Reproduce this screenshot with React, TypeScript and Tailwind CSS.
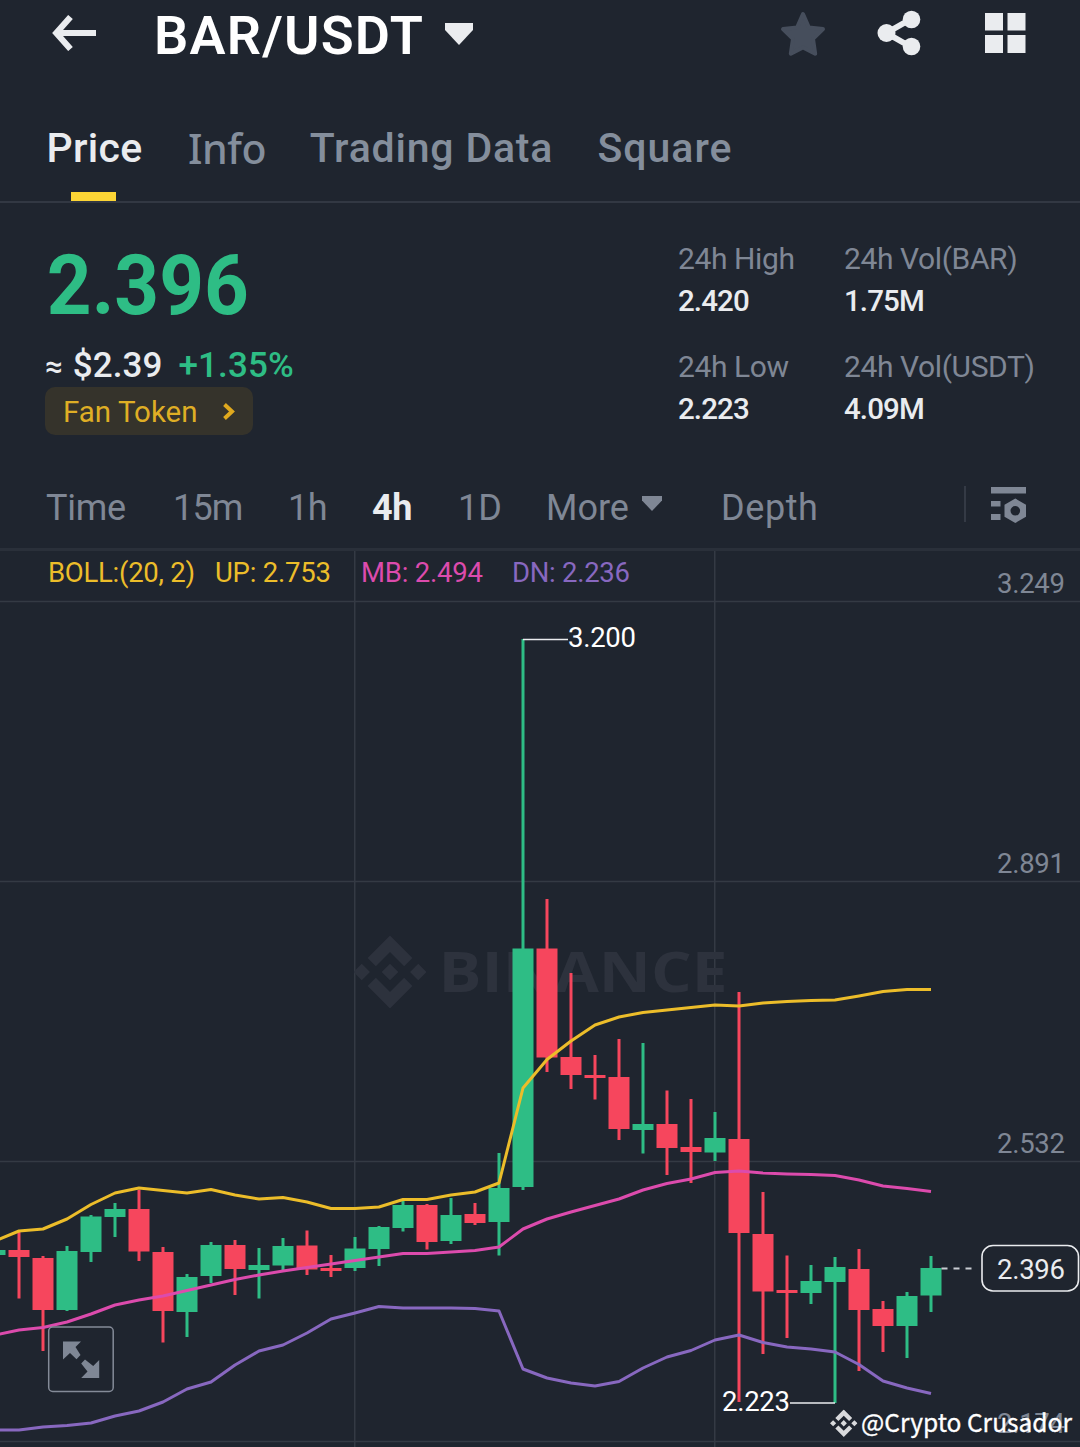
import { useState } from "react";
import clsx from "clsx";

type Candle = {
  up: boolean;
  high: number;
  top: number;
  bottom: number;
  low: number;
};

const STEP = 24;
const FIRST_X = -5;

// up, high, body top, body bottom, low
const RAW: [number, number, number, number, number][] = [
  [1, 1250, 1250, 1255, 1255],
  [0, 1232, 1250, 1257, 1298.5],
  [0, 1256, 1258, 1310, 1351],
  [1, 1246, 1251, 1310, 1311],
  [1, 1215, 1216.5, 1252, 1262],
  [1, 1203, 1209, 1217, 1237],
  [0, 1190, 1209, 1251.5, 1261],
  [0, 1247, 1252, 1311, 1342.5],
  [1, 1274, 1277, 1312, 1337],
  [1, 1242, 1245, 1276, 1283],
  [0, 1240, 1245, 1269, 1295],
  [1, 1248, 1265, 1270, 1298.5],
  [1, 1238, 1246, 1265.5, 1270],
  [0, 1230.5, 1245.5, 1269.5, 1275],
  [0, 1255, 1268, 1271, 1277],
  [1, 1237, 1248.5, 1268, 1271],
  [1, 1226, 1227, 1249, 1266],
  [1, 1201, 1205, 1228, 1231.5],
  [0, 1204, 1205, 1242, 1249.5],
  [1, 1198, 1215, 1241, 1244],
  [0, 1203, 1214, 1223, 1225],
  [1, 1153, 1188, 1222, 1255.5],
  [1, 639, 948.5, 1187, 1190],
  [0, 899, 948.5, 1057.5, 1072],
  [0, 973, 1057, 1075, 1089],
  [0, 1055, 1075, 1078, 1099.5],
  [0, 1039, 1077, 1129, 1140],
  [1, 1043, 1124, 1130, 1153.5],
  [0, 1090.5, 1124, 1148, 1175],
  [0, 1099, 1147, 1152, 1183],
  [1, 1112, 1138, 1152.5, 1161],
  [0, 992, 1139, 1233, 1402],
  [0, 1192, 1234, 1291.5, 1354],
  [0, 1255.5, 1290, 1293, 1338],
  [1, 1265, 1281, 1293, 1304],
  [1, 1257, 1267, 1282, 1403],
  [0, 1249, 1269, 1310, 1371],
  [0, 1301, 1309, 1326, 1352],
  [1, 1292, 1296, 1326, 1358],
  [1, 1256, 1268, 1295.5, 1312],
];

const CANDLES: Candle[] = RAW.map(([up, high, top, bottom, low]) => ({ up: up === 1, high, top, bottom, low }));

const BANDS = [
  {
    name: "up",
    color: "#ecbd2a",
    values: [
      1241, 1231, 1229, 1219, 1204.5, 1193, 1188, 1190.5, 1193, 1189.5, 1195, 1199, 1197.5, 1202, 1208.5, 1208.5,
      1207, 1199.5, 1199.5, 1195, 1192, 1183, 1088, 1059.5, 1041, 1025, 1017, 1012.5, 1010, 1007.5, 1005, 1006,
      1003, 1001.5, 1000.5, 1000, 996, 991.5, 989.5, 989.5,
    ],
  },
  {
    name: "mid",
    color: "#dc4bad",
    values: [
      1335, 1330, 1327.5, 1322, 1314, 1305, 1300, 1296, 1290.5, 1285, 1279.5, 1275, 1271, 1267.5, 1264, 1260.5,
      1257, 1253.5, 1253.5, 1252, 1250.5, 1247, 1229, 1219, 1212, 1205.5, 1199, 1190, 1183.5, 1179, 1172.5, 1171,
      1173, 1174, 1174.5, 1175.5, 1180, 1186, 1188.5, 1191.5,
    ],
  },
  {
    name: "down",
    color: "#8868c0",
    values: [
      1430, 1430, 1427, 1425.5, 1423, 1416, 1411, 1402, 1389, 1382, 1365, 1351, 1345, 1333, 1319, 1313,
      1306.5, 1308, 1308, 1308, 1308.5, 1311, 1369, 1378, 1383, 1386, 1381.5, 1368, 1357, 1350.5, 1340, 1335,
      1342.5, 1347, 1349, 1352, 1364.5, 1381, 1388, 1393.5,
    ],
  },
];

const AXIS = [
  { y: 601.5, label: "3.249" },
  { y: 881.5, label: "2.891" },
  { y: 1161.5, label: "2.532" },
  { y: 1441.5, label: "2.174" },
];

const LEGEND = [
  { x: 48, width: 147, color: "#ecbd2a", text: "BOLL:(20, 2)" },
  { x: 215, width: 116, color: "#ecbd2a", text: "UP: 2.753" },
  { x: 361, width: 122, color: "#dc4bad", text: "MB: 2.494" },
  { x: 512, width: 118, color: "#8868c0", text: "DN: 2.236" },
];

const TABS = [
  { label: "Price", width: "w-[99px]", style: "pl-[2px] tracking-[0.3px]" },
  { label: "Info", width: "w-[78px]", style: "font-['Noto_Sans',sans-serif] tracking-[-0.5px]" },
  { label: "Trading Data", width: "w-[241px]", style: "tracking-[0.8px]" },
  { label: "Square", width: "w-[136px]", style: "tracking-[1px]" },
];

const STATS = [
  { label: "24h High", value: "2.420" },
  { label: "24h Vol(BAR)", value: "1.75M" },
  { label: "24h Low", value: "2.223" },
  { label: "24h Vol(USDT)", value: "4.09M" },
];

const INTERVALS = [
  { label: "Time", width: "w-[127px] tracking-[-0.3px]" },
  { label: "15m", width: "w-[115px] tracking-[-0.8px]" },
  { label: "1h", width: "w-[84px] tracking-[-0.5px]" },
  { label: "4h", width: "w-[86px] tracking-[-0.5px]" },
  { label: "1D", width: "w-[88px]" },
];

function BinanceMark({ x, y, size, fill }: { x: number; y: number; size: number; fill: string }) {
  return (
    <svg x={x} y={y} width={size} height={size} viewBox="0 0 126.6 126.6" fill={fill}>
      <path d="M38.7 53.2 63.3 28.6 87.9 53.2 102.2 38.9 63.3 0 24.4 38.9zM0 63.3 14.3 49 28.6 63.3 14.3 77.6zM38.7 73.4 63.3 98 87.9 73.4 102.2 87.7 63.3 126.6 24.4 87.7zM98 63.3 112.3 49 126.6 63.3 112.3 77.6zM77.8 63.3 63.3 48.8 48.8 63.3 63.3 77.8z" />
    </svg>
  );
}

function Header() {
  return (
    <header className="flex h-[70px] items-center pl-[52px] pr-[54px]">
      <svg className="mt-[-4px] h-[36px] w-[46px]" viewBox="0 0 46 36" fill="none" stroke="#eaecef" strokeWidth="6.2">
        <path d="M44 18H6M18.500 2 4.300 18l14.200 16" />
      </svg>
      <h1 className="ml-[56px] w-[270px] whitespace-nowrap pt-[2px] text-[54px] leading-[70px] font-semibold tracking-[1.2px] text-white">
        BAR/USDT
      </h1>
      <svg className="ml-[21px] mt-[-2px] h-[22px] w-[28px]" viewBox="0 0 28 22" fill="#eaecef">
        <path d="M0 0h28v7L14 22 0 7z" />
      </svg>
      <div className="ml-auto flex items-center">
        <svg className="mt-[-2px] h-[46px] w-[46px]" viewBox="0 0 46 46" fill="#464e5c" stroke="#464e5c" strokeWidth="4" strokeLinejoin="round">
          <path d="m23 3 5.900 13.500 14.100 1.600-10 9.600 2.200 15L23 36.500l-12.200 6.200 2.200-15L3 18.100l14.100-1.600z" />
        </svg>
        <svg className="ml-[51px] mt-[-4px] h-[46px] w-[44px]" viewBox="0 0 44 46" fill="#eaecef">
          <path d="M34 9 9.500 23 34 37" fill="none" stroke="#eaecef" strokeWidth="6" />
          <circle cx="34.500" cy="9.500" r="8.800" />
          <circle cx="9.500" cy="23" r="9" />
          <circle cx="34.500" cy="36.500" r="8.800" />
        </svg>
        <svg className="ml-[64px] mt-[-4px] h-[40px] w-[41px]" viewBox="0 0 41 40" fill="#eaecef">
          <path d="M0 0h18v17.500H0zM22.500 0h18v17.500h-18zM0 22h18v18H0zM22.500 22h18v18h-18z" />
        </svg>
      </div>
    </header>
  );
}

function Tabs() {
  const [active, setActive] = useState("Price");
  return (
    <nav className="flex h-[133px] items-end gap-[45px] border-b-2 border-[#323843] pl-[44px]">
      {TABS.map((tab) => (
        <button
          key={tab.label}
          type="button"
          onClick={() => setActive(tab.label)}
          className={clsx(
            "flex flex-col items-center whitespace-nowrap text-[41px] leading-[60px] font-medium",
            tab.width,
            tab.label === active ? "text-[#eaecef]" : "text-[#848e9c]",
          )}
        >
          <span className={tab.style}>{tab.label}</span>
          <span className={clsx("mt-[14px] h-[9px] w-[45px]", tab.label === active && "bg-[#fcd535]")} />
        </button>
      ))}
    </nav>
  );
}

function Summary() {
  return (
    <section className="flex h-[264px] justify-between pl-[45px] pr-[36px]">
      <div className="pt-[38px]">
        <div className="h-[88px] origin-left scale-x-[0.93] pl-[2px] text-[84px] leading-[90px] font-bold text-[#2ebd85]">
          2.396
        </div>
        <div className="flex h-[58px] items-center gap-[16px] pt-[16px] text-[35px] leading-[44px] font-medium tracking-[0.1px]">
          <span className="whitespace-nowrap text-[#eaecef]">
            <span className="mr-[10px] text-[31px]">≈</span>$2.39
          </span>
          <span className="text-[#2ebd85]">+1.35%</span>
        </div>
        <button type="button" className="flex h-[48px] w-[208px] items-center rounded-[10px] bg-[#35332b] pl-[18px] text-[29.500px] text-[#dfae25]">
          <span className="pt-[2px]">Fan Token</span>
          <svg className="ml-auto mr-[18px] h-[17px] w-[12px]" viewBox="0 0 12 17" fill="none" stroke="#e0a91e" strokeWidth="4">
            <path d="m1.500 1.500 7.500 7-7.500 7" />
          </svg>
        </button>
      </div>
      <dl className="grid grid-cols-[166px_200px] content-start gap-y-[24px] pt-[35px] pl-[1px]">
        {STATS.map((s) => (
          <div key={s.label} className="whitespace-nowrap leading-[42px]">
            <dt className="text-[30px] tracking-[-0.4px] text-[#7f8795]">{s.label}</dt>
            <dd className="text-[29.500px] font-medium tracking-[-0.9px] text-[#eaecef]">{s.value}</dd>
          </div>
        ))}
      </dl>
    </section>
  );
}

function Intervals() {
  const [active, setActive] = useState("4h");
  return (
    <div className="flex h-[84px] items-center border-b-[3px] border-[#2a303a] pl-[46px] text-[36px] text-[#7f8795]">
      {INTERVALS.map((i) => (
        <button
          key={i.label}
          type="button"
          onClick={() => setActive(i.label)}
          className={clsx("text-left", i.width, i.label === active && "font-bold text-[#eaecef]")}
        >
          {i.label}
        </button>
      ))}
      <button type="button" className="flex w-[175px] items-center">
        <span className="w-[96px] text-left">More</span>
        <svg className="mt-[-8px] h-[15px] w-[20px]" viewBox="0 0 20 15" fill="#7f8795">
          <path d="M0 0h20v4.500L10 15 0 4.500z" />
        </svg>
      </button>
      <button type="button" className="tracking-[0.6px]">Depth</button>
      <span className="mt-[-7px] ml-auto h-[36px] w-[2px] bg-[#343a45]" />
      <svg className="mt-[-5px] mr-[53px] ml-[25px] h-[36px] w-[36px]" viewBox="0 0 36 36" fill="#7f8795">
        <path d="M0 0h35v6.500H0zM0 14h9.500v5.500H0zM0 27h9.500v6H0z" />
        <path fillRule="evenodd" d="M24.300 11.500 35 17.700v12L24.300 36l-10.800-6.300v-12zM24.300 19a4.800 4.800 0 1 0 0 9.600 4.800 4.800 0 0 0 0-9.600z" />
      </svg>
    </div>
  );
}

function Chart() {
  const points = (values: number[]) => values.map((y, i) => `${FIRST_X + i * STEP},${y}`).join(" ");

  return (
    <svg className="block h-[896px] w-[1080px]" viewBox="0 551 1080 896" fontSize="27.500">
      <g stroke="#343a44" strokeWidth="1.500">
        {AXIS.map((a) => (
          <line key={a.label} x1="0" x2="1080" y1={a.y} y2={a.y} />
        ))}
        <line x1="354.750" x2="354.750" y1="551" y2="1447" />
        <line x1="714.750" x2="714.750" y1="551" y2="1447" />
      </g>

      <BinanceMark x={353.500} y={935.500} size={73} fill="#2d323d" />
      <text x="438.500" y="992" textLength="289" lengthAdjust="spacingAndGlyphs" fontSize="56" fontWeight="700" fill="#2d323d" className="font-['Open_Sans',sans-serif]">
        BINANCE
      </text>

      {LEGEND.map((l) => (
        <text key={l.text} x={l.x} y="582" textLength={l.width} fill={l.color}>
          {l.text}
        </text>
      ))}
      {AXIS.map((a) => (
        <text key={a.label} x="997" y={a.y - 8.500} textLength="68" fill="#7f8795">
          {a.label}
        </text>
      ))}

      {CANDLES.map((c, i) => {
        const x = FIRST_X + i * STEP;
        const color = c.up ? "#2ebd85" : "#f6465d";
        return (
          <g key={i} fill={color}>
            <rect x={x - 1.500} y={c.high} width="3" height={c.low - c.high} />
            <rect x={x - 10.500} y={c.top} width="21" height={c.bottom - c.top} />
          </g>
        );
      })}

      {BANDS.map((b) => (
        <polyline key={b.name} points={points(b.values)} fill="none" stroke={b.color} strokeWidth="3" strokeLinejoin="round" />
      ))}

      {/* high / low markers */}
      <path d="M523 639.500h45M790 1403h45" stroke="#eaecef" strokeWidth="1.500" />
      <text x="568" y="647" textLength="68" fill="#fff">
        3.200
      </text>
      <text x="722" y="1411" textLength="68" fill="#fff">
        2.223
      </text>

      {/* last price */}
      <path d="M941.500 1268.500h32" stroke="#c9cdd3" strokeWidth="1.800" strokeDasharray="6 6" />
      <rect x="982" y="1245.500" width="96.500" height="45.500" rx="11" fill="#1f252f" stroke="#eaecef" strokeWidth="1.600" />
      <text x="997" y="1279" textLength="68" fill="#eaecef">
        2.396
      </text>

      {/* fullscreen toggle */}
      <rect x="48.700" y="1327" width="64.500" height="64.500" rx="4" fill="#1f252f" stroke="#848b98" strokeWidth="1.500" />
      <path
        d="M63 1341.500h18l-5.500 5.500 5 8-4 4.200-6.500-6.200-7 6.500zM99.200 1378v-18l-6 6-8.200-6.500-3.800 4 6.300 8-6.300 6.500z"
        fill="#7f8795"
      />

      <BinanceMark x={830} y={1409.500} size={27.500} fill="#d9dadc" />
      <text x="861" y="1431.500" textLength="211" lengthAdjust="spacingAndGlyphs" fontSize="24.500" fill="#fff" stroke="#fff" strokeWidth="0.300" className="font-['Noto_Sans_CJK_SC',sans-serif]">
        @Crypto Crusador
      </text>
    </svg>
  );
}

export default function App() {
  return (
    <main className="h-[1447px] w-[1080px] overflow-hidden bg-[#1f252f] font-[Roboto,sans-serif]">
      <Header />
      <Tabs />
      <Summary />
      <Intervals />
      <Chart />
    </main>
  );
}
